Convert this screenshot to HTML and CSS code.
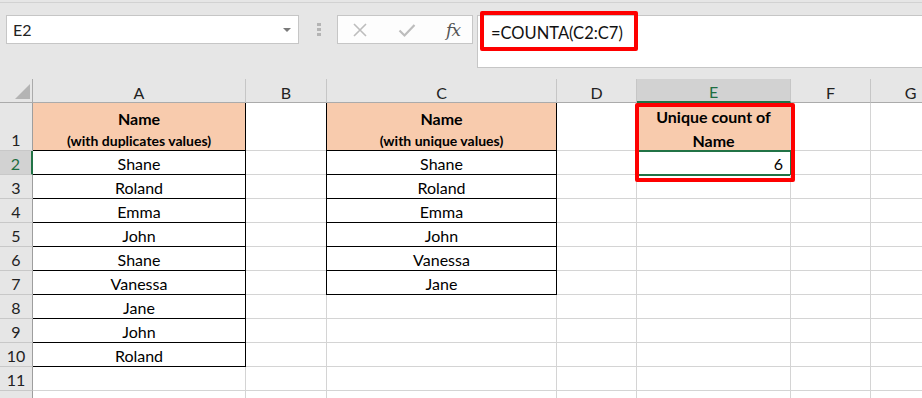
FILE: index.html
```html
<!DOCTYPE html>
<html lang="en">
<head>
	<meta charset="UTF-8">
	<title>Unique count</title>
	<link rel="stylesheet" href="styles.css">
</head>
<body>
	<div class="toolbar">
		<div class="namebox">
			<span>E2</span>
			<i class="drop"></i>
		</div>
		<div class="grip"><b></b><b></b><b></b></div>
		<div class="fxbox">
			<svg width="16" height="16" viewBox="0 0 16 16"><path d="M2 2L14 14M14 2L2 14" stroke="#bdbdbd" stroke-width="1.6" fill="none"/></svg>
			<svg width="18" height="16" viewBox="0 0 18 16"><path d="M1.5 8.5L6.5 13.5L16.5 3" stroke="#bdbdbd" stroke-width="2.2" fill="none"/></svg>
			<span class="fx">fx</span>
		</div>
		<div class="formula">=COUNTA(C2:C7)</div>
	</div>

	<div class="sheet">
		<!-- column headers -->
		<div class="corner"></div>
		<div class="ch">A</div>
		<div class="ch">B</div>
		<div class="ch">C</div>
		<div class="ch">D</div>
		<div class="ch on">E</div>
		<div class="ch">F</div>
		<div class="ch">G</div>

		<!-- row 1 -->
		<div class="rh">1</div>
		<div class="c t hd"><div><b class="big">Name</b><b class="small">(with duplicates values)</b></div></div>
		<div class="c"></div>
		<div class="c t l hd"><div><b class="big">Name</b><b class="small">(with unique values)</b></div></div>
		<div class="c"></div>
		<div class="c hd two"><div><b class="big">Unique count of</b><b class="big">Name</b></div></div>
		<div class="c"></div>
		<div class="c"></div>

		<!-- row 2 -->
		<div class="rh on">2</div>
		<div class="c t">Shane</div>
		<div class="c"></div>
		<div class="c t l">Shane</div>
		<div class="c"></div>
		<div class="c num sel">6</div>
		<div class="c"></div>
		<div class="c"></div>

		<div class="rh">3</div>
		<div class="c t">Roland</div>
		<div class="c"></div>
		<div class="c t l">Roland</div>
		<div class="c"></div><div class="c"></div><div class="c"></div><div class="c"></div>

		<div class="rh">4</div>
		<div class="c t">Emma</div>
		<div class="c"></div>
		<div class="c t l">Emma</div>
		<div class="c"></div><div class="c"></div><div class="c"></div><div class="c"></div>

		<div class="rh">5</div>
		<div class="c t">John</div>
		<div class="c"></div>
		<div class="c t l">John</div>
		<div class="c"></div><div class="c"></div><div class="c"></div><div class="c"></div>

		<div class="rh">6</div>
		<div class="c t">Shane</div>
		<div class="c"></div>
		<div class="c t l">Vanessa</div>
		<div class="c"></div><div class="c"></div><div class="c"></div><div class="c"></div>

		<div class="rh">7</div>
		<div class="c t">Vanessa</div>
		<div class="c"></div>
		<div class="c t l">Jane</div>
		<div class="c"></div><div class="c"></div><div class="c"></div><div class="c"></div>

		<div class="rh">8</div>
		<div class="c t">Jane</div>
		<div class="c"></div><div class="c"></div><div class="c"></div><div class="c"></div><div class="c"></div><div class="c"></div>

		<div class="rh">9</div>
		<div class="c t">John</div>
		<div class="c"></div><div class="c"></div><div class="c"></div><div class="c"></div><div class="c"></div><div class="c"></div>

		<div class="rh">10</div>
		<div class="c t">Roland</div>
		<div class="c"></div><div class="c"></div><div class="c"></div><div class="c"></div><div class="c"></div><div class="c"></div>

		<div class="rh">11</div>
		<div class="c"></div><div class="c"></div><div class="c"></div><div class="c"></div><div class="c"></div><div class="c"></div><div class="c"></div>

		<!-- row 12, only its top edge is in view -->
		<div class="rh"></div>
		<div class="c"></div><div class="c"></div><div class="c"></div><div class="c"></div><div class="c"></div><div class="c"></div><div class="c"></div>
	</div>

	<!-- highlight boxes -->
	<div class="mark mark-formula"></div>
	<div class="mark mark-cell"></div>
</body>
</html>
```

FILE: styles.css
```css
html, body {
	margin: 0;
	height: 398px;
	overflow: hidden;
}
body {
	background: #e6e6e6;
	font-family: Lato, "Liberation Sans", sans-serif;
	font-size: 16px;
	color: #000;
	position: relative;
	width: 922px;
}
.toolbar {
	margin-top: 2px;
	border-top: 1px solid #d2d2d2;
	height: 77px;
	box-sizing: border-box;
	padding: 12px 0 0 6px;
	display: flex;
	align-items: flex-start;
}
.namebox {
	width: 293px;
	height: 29px;
	box-sizing: border-box;
	background: #fff;
	border: 1px solid #c6c6c6;
	display: flex;
	align-items: center;
	justify-content: space-between;
	padding: 0 7px 0 6px;
	color: #222;
}
.namebox .drop {
	width: 0;
	height: 0;
	border-left: 4px solid transparent;
	border-right: 4px solid transparent;
	border-top: 4px solid #7a7a7a;
	margin-top: 1px;
}
.grip {
	width: 4px;
	margin: 8px 16px 0 18px;
	display: flex;
	flex-direction: column;
	gap: 2px;
}
.grip b {
	display: block;
	width: 4px;
	height: 3px;
	background: #b4b4b4;
}
.fxbox {
	width: 136px;
	height: 29px;
	box-sizing: border-box;
	background: #fdfdfd;
	border: 1px solid #c6c6c6;
	display: flex;
	align-items: center;
	padding: 0 12px 0 14px;
	justify-content: space-between;
}
.fxbox .fx {
	font-family: "DejaVu Serif", "Liberation Serif", serif;
	font-style: italic;
	font-size: 17px;
	color: #555;
	letter-spacing: -1px;
}
.formula {
	margin-left: 4px;
	flex: 1;
	height: 53px;
	box-sizing: border-box;
	background: #fff;
	border: 1px solid #c6c6c6;
	border-right: 0;
	padding: 5px 0 0 13px;
	line-height: 24px;
	font-size: 16.5px;
	color: #111;
}

.sheet {
	display: grid;
	grid-template-columns: 33px 213px 81px 230px 80px 154px 80px 80px;
	grid-template-rows: 24px 48px repeat(11, 24px);
	background: #fff;
	width: 951px;
}
.corner {
	background: #e6e6e6;
	border-right: 1px solid #ababab;
	border-bottom: 1px solid #ababab;
	position: relative;
}
.corner::after {
	content: "";
	position: absolute;
	right: 2px;
	bottom: 3px;
	width: 15px;
	height: 15px;
	background: #b4b4b4;
	clip-path: polygon(100% 0, 100% 100%, 0 100%);
}
.ch {
	background: #e6e6e6;
	border-right: 1px solid #c6c6c6;
	border-bottom: 1px solid #ababab;
	display: flex;
	align-items: center;
	justify-content: center;
	padding-top: 3px;
	color: #222;
}
.ch.on {
	background: #d2d2d2;
	color: #1e6e42;
	border-bottom: 2px solid #217346;
}
.rh {
	background: #e6e6e6;
	border-right: 1px solid #9e9e9e;
	border-bottom: 1px solid #c8c8c8;
	display: flex;
	align-items: flex-end;
	justify-content: center;
	line-height: 20px;
	color: #222;
}
.rh.on {
	background: #d2d2d2;
	color: #1e6e42;
	border-right: 2px solid #217346;
}
.c {
	border-right: 1px solid #d4d4d4;
	border-bottom: 1px solid #d4d4d4;
	display: flex;
	align-items: flex-end;
	justify-content: center;
	line-height: 20px;
	white-space: nowrap;
}
.c.t {
	border-right-color: #000;
	border-bottom-color: #000;
}
.c.l {
	box-shadow: -1px 0 0 #000;
}
.c.hd {
	background: #f8cbad;
	text-align: center;
}
.c.hd b {
	display: block;
}
.big {
	font-size: 16px;
	line-height: 26px;
}
.small {
	font-size: 14px;
	line-height: 18px;
}
.c.two {
	align-items: flex-start;
	padding-top: 2px;
}
.two .big {
	line-height: 24px;
}
.c.num {
	justify-content: flex-end;
	padding-right: 7px;
}
.c.sel {
	outline: 2px solid #217346;
	outline-offset: -1px;
}

.mark {
	position: absolute;
	border: 4px solid #fe0000;
	border-radius: 2px;
	box-sizing: border-box;
}
.mark-formula {
	left: 480px;
	top: 11px;
	width: 158px;
	height: 40px;
}
.mark-cell {
	left: 635px;
	top: 103px;
	width: 160px;
	height: 79px;
}
```
